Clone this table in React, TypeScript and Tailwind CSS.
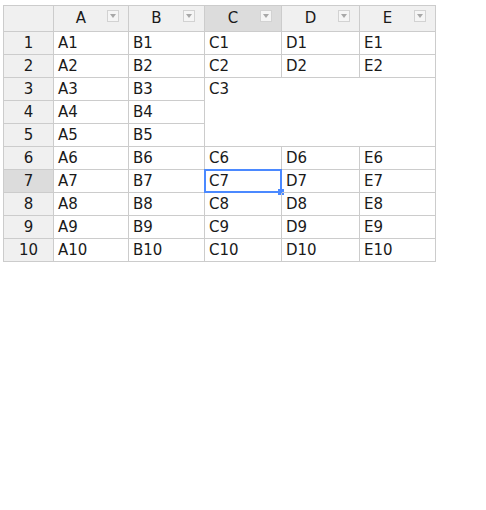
import React from "react";

const cols = ["A", "B", "C", "D", "E"];
const rows = [1, 2, 3, 4, 5, 6, 7, 8, 9, 10];

// merged block C3:E5 -> only C3 is drawn
const isHidden = (c: number, r: number) => r >= 3 && r <= 5 && c >= 2 && !(c === 2 && r === 3);

const DropBtn = () => (
    <span className="absolute right-[9px] top-[4px] flex h-[12px] w-[12px] items-center justify-center border border-[#d2d2d2] bg-[#f5f5f5]">
        <svg width="6" height="4" viewBox="0 0 6 4">
            <path d="M0 0h6L3 4z" fill="#a8a8a8" />
        </svg>
    </span>
);

export default function App() {
    return (
        <div className="h-[510px] w-[486px] bg-white pl-[3px] pt-[5px] text-[15px] text-[#1a1a1a]" style={{ fontFamily: '"DejaVu Sans", Verdana, sans-serif' }}>
            <div className="grid w-fit grid-cols-[51px_75px_76px_77px_78px_76px] grid-rows-[27px_repeat(10,23px)]">
                {/* corner */}
                <div className="border-b border-l border-r border-t border-[#ccc] bg-[#f0f0f0]" />
                {cols.map((c, i) => (
                    <div
                        key={c}
                        className={`relative flex items-center justify-center border-b border-r border-t border-[#ccc] pr-[20px] ${i === 2 ? "bg-[#dcdcdc]" : "bg-[#f0f0f0]"}`}
                    >
                        {c}
                        <DropBtn />
                    </div>
                ))}

                {rows.map((r) =>
                    [
                        <div
                            key={`h${r}`}
                            className={`flex items-center justify-center border-b border-l border-r border-[#ccc] ${r === 7 ? "bg-[#dcdcdc]" : "bg-[#f0f0f0]"}`}
                        >
                            {r}
                        </div>,
                        ...cols.map((c, ci) => {
                            if (isHidden(ci, r)) return null;
                            const merged = ci === 2 && r === 3;
                            const selected = ci === 2 && r === 7;
                            return (
                                <div
                                    key={`${c}${r}`}
                                    className={`relative border-b border-r border-[#ccc] px-[4px] leading-[22px] ${merged ? "col-span-3 row-span-3" : ""}`}
                                >
                                    {c}
                                    {r}
                                    {selected && (
                                        <div className="absolute -left-[1px] -top-[1px] h-[24px] w-[78px] border-2 border-[#4b89ff]">
                                            <div className="absolute -bottom-[4px] -right-[4px] h-[6px] w-[6px] bg-[#4b89ff]" />
                                        </div>
                                    )}
                                </div>
                            );
                        }),
                    ]
                )}
            </div>
        </div>
    );
}
